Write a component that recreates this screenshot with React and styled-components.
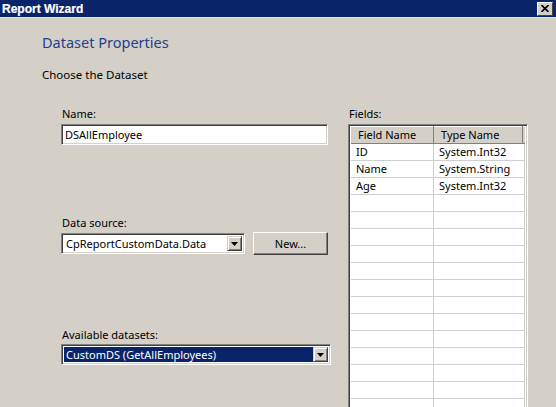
import React from 'react';
import styled, { createGlobalStyle } from 'styled-components';

const GlobalStyle = createGlobalStyle`
  html, body {
    margin: 0;
    padding: 0;
    width: 556px;
    height: 407px;
    overflow: hidden;
    background: #d4d0c8;
  }
  * { box-sizing: border-box; }
`;

const Window = styled.div`
  width: 556px;
  height: 407px;
  display: flex;
  flex-direction: column;
  background: #d4d0c8;
  font-family: "Noto Sans", "Open Sans", sans-serif;
  font-size: 11px;
  color: #000;
  overflow: hidden;
`;

const TitleBar = styled.div`
  height: 18px;
  flex: none;
  background: #0a246a;
  display: flex;
  align-items: center;
  justify-content: space-between;
  padding: 0 3px 0 2px;
  border-bottom: 1px solid #e6e4de;
`;

const TitleText = styled.span`
  font-family: "Liberation Sans", Arial, sans-serif;
  font-weight: bold;
  font-size: 12px;
  color: #fff;
  -webkit-text-stroke: 0.2px #fff;
`;

const CloseButton = styled.div`
  width: 16px;
  height: 14px;
  background: #d4d0c8;
  border-top: 1px solid #fff;
  border-left: 1px solid #fff;
  border-right: 1px solid #404040;
  border-bottom: 1px solid #404040;
  display: flex;
  align-items: center;
  justify-content: center;
`;

const Content = styled.div`
  flex: 1;
  padding: 14px 0 0 42px;
  display: flex;
  flex-direction: column;
`;

const Heading = styled.div`
  font-size: 14.5px;
  color: #21418f;
  line-height: 20px;
`;

const SubHeading = styled.div`
  margin-top: 15px;
  font-size: 11.5px;
  line-height: 16px;
`;

const FormGrid = styled.div`
  margin: 24px 0 0 19px;
  display: grid;
  grid-template-columns: 270px 180px;
  column-gap: 17px;
  align-items: start;
`;

const Column = styled.div`
  display: flex;
  flex-direction: column;
`;

const Label = styled.div`
  margin-top: ${p => p.$top || 0}px;
  line-height: 14px;
  height: 16px;
  padding-left: 1px;
`;

const Row = styled.div`
  display: flex;
  align-items: center;
  gap: 8px;
`;

const TextBox = styled.div`
  width: ${p => p.$w}px;
  height: 21px;
  background: #fff;
  border-top: 1px solid #808080;
  border-left: 1px solid #808080;
  border-right: 1px solid #fff;
  border-bottom: 1px solid #fff;
  box-shadow: inset 1px 1px 0 #404040, inset -1px -1px 0 #d4d0c8;
  padding: 2px 3px;
  line-height: 15px;
  font-size: 11px;
  margin-top: 1px;
`;

const Combo = styled.div`
  width: ${p => p.$w}px;
  height: 21px;
  background: #fff;
  border-top: 1px solid #808080;
  border-left: 1px solid #808080;
  border-right: 1px solid #fff;
  border-bottom: 1px solid #fff;
  box-shadow: inset 1px 1px 0 #404040, inset -1px -1px 0 #d4d0c8;
  padding: 2px;
  display: flex;
`;

const ComboValue = styled.div`
  flex: 1;
  background: ${p => (p.$selected ? '#0a246a' : '#fff')};
  color: ${p => (p.$selected ? '#fff' : '#000')};
  padding: 0 2px;
  line-height: 15px;
  font-size: 11px;
  white-space: nowrap;
  overflow: hidden;
`;

const DropButton = styled.div`
  width: 15px;
  flex: none;
  background: #d4d0c8;
  border-top: 1px solid #d4d0c8;
  border-left: 1px solid #d4d0c8;
  border-right: 1px solid #404040;
  border-bottom: 1px solid #404040;
  box-shadow: inset 1px 1px 0 #fff, inset -1px -1px 0 #808080;
  display: flex;
  align-items: center;
  justify-content: center;
`;

const Button = styled.div`
  width: 75px;
  height: 23px;
  background: #d4d0c8;
  border-top: 1px solid #fff;
  border-left: 1px solid #fff;
  border-right: 1px solid #404040;
  border-bottom: 1px solid #404040;
  box-shadow: inset -1px -1px 0 #808080;
  display: flex;
  align-items: center;
  justify-content: center;
  font-size: 11px;
`;

const ListView = styled.div`
  margin-top: 1px;
  height: 300px;
  background: #fff;
  border-top: 1px solid #808080;
  border-left: 1px solid #808080;
  border-right: 1px solid #fff;
  box-shadow: inset 1px 1px 0 #404040, inset -1px 0 0 #d4d0c8;
  padding: 1px 2px 0 2px;
  overflow: hidden;
`;

const ListRow = styled.div`
  display: grid;
  grid-template-columns: 83px 1fr;
  height: ${p => (p.$header ? 18 : 17)}px;
  border-bottom: 1px solid ${p => (p.$header ? '#808080' : '#cfcfcf')};
  background: ${p => (p.$header ? '#d4d0c8' : '#fff')};
  box-shadow: ${p => (p.$header ? 'inset 0 1px 0 #fff' : 'none')};
`;

const Cell = styled.div`
  border-right: 1px solid ${p => (p.$header ? '#808080' : '#cfcfcf')};
  padding-left: ${p => (p.$header ? 7 : 5)}px;
  line-height: ${p => (p.$header ? 17 : 16)}px;
  font-size: 11px;
  white-space: nowrap;
  overflow: hidden;
  ${p => (p.$header && p.$last ? 'margin-right: 2px;' : '')}
`;

const Arrow = () => (
  <svg width="7" height="4" viewBox="0 0 7 4">
    <path d="M0 0 H7 L3.5 4 Z" fill="#000" />
  </svg>
);

const fields = [
  ['ID', 'System.Int32'],
  ['Name', 'System.String'],
  ['Age', 'System.Int32'],
];

export default function App() {
  const rows = [...fields];
  while (rows.length < 17) rows.push(['', '']);

  return (
    <>
      <GlobalStyle />
      <Window>
        <TitleBar>
          <TitleText>Report Wizard</TitleText>
          <CloseButton>
            <svg width="8" height="7" viewBox="0 0 8 7">
              <path d="M0.5 0 L7.5 7 M7.5 0 L0.5 7" stroke="#000" strokeWidth="1.6" />
            </svg>
          </CloseButton>
        </TitleBar>
        <Content>
          <Heading>Dataset Properties</Heading>
          <SubHeading>Choose the Dataset</SubHeading>
          <FormGrid>
            <Column>
              <Label>Name:</Label>
              <TextBox $w={267}>DSAllEmployee</TextBox>

              <Label $top={71}>Data source:</Label>
              <Row>
                <Combo $w={184}>
                  <ComboValue>CpReportCustomData.Data</ComboValue>
                  <DropButton><Arrow /></DropButton>
                </Combo>
                <Button>New...</Button>
              </Row>

              <Label $top={73}>Available datasets:</Label>
              <Combo $w={270}>
                <ComboValue $selected>CustomDS (GetAllEmployees)</ComboValue>
                <DropButton><Arrow /></DropButton>
              </Combo>
            </Column>

            <Column>
              <Label>Fields:</Label>
              <ListView>
                <ListRow $header>
                  <Cell $header>Field Name</Cell>
                  <Cell $header $last>Type Name</Cell>
                </ListRow>
                {rows.map((r, i) => (
                  <ListRow key={i}>
                    <Cell>{r[0]}</Cell>
                    <Cell>{r[1]}</Cell>
                  </ListRow>
                ))}
              </ListView>
            </Column>
          </FormGrid>
        </Content>
      </Window>
    </>
  );
}
